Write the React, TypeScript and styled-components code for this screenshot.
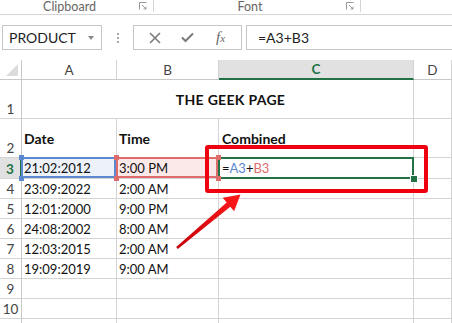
import React from 'react';
import styled, { createGlobalStyle, css } from 'styled-components';

const GRID = '#d4d4d4';
const GREEN = '#217346';
const REF_BLUE = '#5b88cf';
const REF_RED = '#df6c6a';

const GlobalStyle = createGlobalStyle`
  html, body {
    margin: 0;
    padding: 0;
    background: #ffffff;
  }
  * {
    box-sizing: border-box;
  }
`

const Page = styled.div `
  position: relative;
  width: 452px;
  height: 323px;
  overflow: hidden;
  background: #ffffff;
  font-family: Lato, "Open Sans", sans-serif;
`
const RibbonFooter = styled.div `
  height: 15px;
  display: flex;
  border-bottom: 1px solid #d5d5d5;
`
const RibbonGroup = styled.div<{ $width: number }> `
  width: ${p => p.$width}px;
  height: 12px;
  display: flex;
  align-items: center;
  border-right: 1px solid #d5d5d5;
  padding-right: 6px;
`
const GroupLabel = styled.span `
  flex: 1;
  text-align: center;
  font-size: 12.5px;
  line-height: 12px;
  color: #666666;
  margin-top: 1px;
`
const FormulaBar = styled.div `
  display: flex;
  height: 25px;
  margin-top: 10px;
  padding-left: 2px;
`
const NameBox = styled.div `
  width: 100px;
  border: 1px solid #c6c6c6;
  display: flex;
  align-items: center;
  padding: 0 7px 0 6px;
  font-size: 14px;
  color: #222222;
  justify-content: space-between;
`
const Caret = styled.span `
  width: 0;
  height: 0;
  border-left: 3.5px solid transparent;
  border-right: 3.5px solid transparent;
  border-top: 4px solid #8a8a8a;
`
const Grip = styled.div `
  width: 31px;
  display: flex;
  flex-direction: column;
  align-items: center;
  justify-content: center;
  gap: 2px;
  & > span {
    width: 2px;
    height: 2px;
    background: #a8a8a8;
  }
`
const ButtonsBox = styled.div `
  width: 109px;
  border: 1px solid #c6c6c6;
  display: flex;
  align-items: center;
  justify-content: space-around;
  padding: 0 4px;
`
const IconButton = styled.span `
  width: 22px;
  display: flex;
  justify-content: center;
  align-items: center;
  color: #777777;
`
const Fx = styled.span `
  font-family: "Liberation Serif", serif;
  font-style: italic;
  font-size: 15px;
  color: #666666;
  & > small {
    font-size: 11px;
  }
`
const FormulaInput = styled.div `
  flex: 1;
  margin-left: 4px;
  border: 1px solid #c6c6c6;
  border-right: none;
  display: flex;
  align-items: center;
  padding-left: 11px;
  font-size: 14px;
  color: #222222;
`
const Sheet = styled.div `
  margin-top: 10px;
  display: grid;
  grid-template-columns: 22px 95px 102px 195px 1fr;
  grid-template-rows: 20px 39px 39px 21px repeat(8, 20px);
`
const Corner = styled.div `
  position: relative;
  border-right: 1px solid #c8c8c8;
  border-bottom: 1px solid #c8c8c8;
  &::after {
    content: '';
    position: absolute;
    right: 3px;
    bottom: 3px;
    width: 0;
    height: 0;
    border-left: 12px solid transparent;
    border-bottom: 12px solid #dcdcdc;
  }
`
const ColHeader = styled.div<{ $active?: boolean }> `
  display: flex;
  align-items: center;
  justify-content: center;
  font-size: 13.5px;
  color: #444444;
  border-right: 1px solid ${GRID};
  border-bottom: 1px solid #c8c8c8;
  ${p => p.$active && css`
    background: #e1e1e1;
    color: ${GREEN};
    font-weight: 700;
    border-bottom: 2px solid ${GREEN};
  `}
`
const RowHeader = styled.div<{ $active?: boolean }> `
  display: flex;
  align-items: flex-end;
  justify-content: center;
  padding-bottom: 1px;
  font-size: 13.5px;
  color: #444444;
  border-right: 1px solid #c8c8c8;
  border-bottom: 1px solid ${GRID};
  ${p => p.$active && css`
    background: #e1e1e1;
    color: ${GREEN};
    font-weight: 700;
    border-right: 2px solid ${GREEN};
  `}
`
const Cell = styled.div<{ $bold?: boolean; $span?: number; $center?: boolean; $tone?: string; $fill?: string }> `
  position: relative;
  display: flex;
  align-items: center;
  justify-content: ${p => (p.$center ? 'center' : 'flex-start')};
  padding-left: 2px;
  grid-column: span ${p => p.$span || 1};
  font-size: ${p => (p.$bold ? '14px' : '13px')};
  font-weight: ${p => (p.$bold ? 700 : 400)};
  color: #111111;
  white-space: nowrap;
  border-right: 1px solid ${GRID};
  border-bottom: 1px solid ${GRID};
  background: ${p => p.$fill || 'transparent'};
  ${p => p.$tone && css`
    &::after {
      content: '';
      position: absolute;
      top: -1px;
      left: -1px;
      right: 0;
      bottom: 0;
      border: 2px solid ${p.$tone};
    }
  `}
`
const Title = styled(Cell) `
  padding-left: 26px;
  letter-spacing: 0.3px;
`
const ActiveCell = styled(Cell) `
  padding-left: 3px;
  z-index: 2;
  &::after {
    content: '';
    position: absolute;
    top: -1px;
    left: -1px;
    right: -1px;
    bottom: -1px;
    border: 2px solid ${GREEN};
  }
`
const Handle = styled.span<{ $color: string; $side: 'left' | 'right'; $edge: 'top' | 'bottom' }> `
  position: absolute;
  z-index: 3;
  width: 5px;
  height: 5px;
  background: ${p => p.$color};
  ${p => p.$side}: -3px;
  ${p => p.$edge}: -3px;
`
const FillHandle = styled.span `
  position: absolute;
  z-index: 3;
  right: -4px;
  bottom: -4px;
  width: 6px;
  height: 6px;
  background: ${GREEN};
  outline: 1px solid #ffffff;
`
const RefA = styled.span `
  color: ${REF_BLUE};
`
const RefB = styled.span `
  color: ${REF_RED};
`
const Callout = styled.div `
  position: absolute;
  z-index: 5;
  left: 205px;
  top: 145px;
  width: 223px;
  height: 48px;
  border: 4px solid #ee0010;
  border-radius: 3px;
`
const Overlay = styled.svg `
  position: absolute;
  z-index: 5;
  left: 0;
  top: 0;
  pointer-events: none;
`

const Launcher = () => (
  <svg width="8" height="8" viewBox="0 0 8 8">
    <path d="M0.5 7.5V0.5H7.5" fill="none" stroke="#9a9a9a" />
    <path d="M3 3L7 7M7 4.5V7H4.5" fill="none" stroke="#9a9a9a" />
  </svg>
);

const rows = [
  ['21:02:2012', '3:00 PM'],
  ['23:09:2022', '2:00 AM'],
  ['12:01:2000', '9:00 PM'],
  ['24:08:2002', '8:00 AM'],
  ['12:03:2015', '2:00 AM'],
  ['19:09:2019', '9:00 AM'],
];

function App() {
  return (
    <Page>
      <GlobalStyle />
      <RibbonFooter>
        <RibbonGroup $width={154}>
          <GroupLabel>Clipboard</GroupLabel>
          <Launcher />
        </RibbonGroup>
        <RibbonGroup $width={207}>
          <GroupLabel>Font</GroupLabel>
          <Launcher />
        </RibbonGroup>
      </RibbonFooter>

      <FormulaBar>
        <NameBox>PRODUCT <Caret /></NameBox>
        <Grip><span /><span /><span /></Grip>
        <ButtonsBox>
          <IconButton>
            <svg width="12" height="12" viewBox="0 0 12 12">
              <path d="M1 1L11 11M11 1L1 11" stroke="#7a7a7a" strokeWidth="1.6" />
            </svg>
          </IconButton>
          <IconButton>
            <svg width="13" height="11" viewBox="0 0 13 11">
              <path d="M1 5.5L4.5 9L12 1.5" fill="none" stroke="#7a7a7a" strokeWidth="2" />
            </svg>
          </IconButton>
          <IconButton>
            <Fx>f<small>x</small></Fx>
          </IconButton>
        </ButtonsBox>
        <FormulaInput>=A3+B3</FormulaInput>
      </FormulaBar>

      <Sheet>
        <Corner />
        <ColHeader>A</ColHeader>
        <ColHeader>B</ColHeader>
        <ColHeader $active>C</ColHeader>
        <ColHeader>D</ColHeader>

        <RowHeader>1</RowHeader>
        <Title $span={3} $bold $center>THE GEEK PAGE</Title>
        <Cell />

        <RowHeader>2</RowHeader>
        <Cell $bold>Date</Cell>
        <Cell $bold>Time</Cell>
        <Cell $bold style={{ paddingLeft: 3 }}>Combined</Cell>
        <Cell />

        {rows.map(([date, time], i) => {
          const n = i + 3;
          if (n === 3) {
            return (
              <React.Fragment key={n}>
                <RowHeader $active>{n}</RowHeader>
                <Cell $tone={REF_BLUE} $fill="#edf2fa">
                  {date}
                  <Handle $color={REF_BLUE} $side="left" $edge="top" />
                  <Handle $color={REF_BLUE} $side="left" $edge="bottom" />
                </Cell>
                <Cell $tone={REF_RED} $fill="#fbe8e8">
                  {time}
                  <Handle $color={REF_RED} $side="left" $edge="top" />
                  <Handle $color={REF_RED} $side="left" $edge="bottom" />
                  <Handle $color={REF_RED} $side="right" $edge="top" />
                  <Handle $color={REF_RED} $side="right" $edge="bottom" />
                </Cell>
                <ActiveCell>
                  =<RefA>A3</RefA>+<RefB>B3</RefB>
                  <FillHandle />
                </ActiveCell>
                <Cell />
              </React.Fragment>
            );
          }
          return (
            <React.Fragment key={n}>
              <RowHeader>{n}</RowHeader>
              <Cell>{date}</Cell>
              <Cell>{time}</Cell>
              <Cell />
              <Cell />
            </React.Fragment>
          );
        })}

        {[9, 10, 0, 0].map((n, i) => (
          <React.Fragment key={i}>
            <RowHeader>{n || ''}</RowHeader>
            <Cell />
            <Cell />
            <Cell />
            <Cell />
          </React.Fragment>
        ))}
      </Sheet>

      <Callout />
      <Overlay width="452" height="323" viewBox="0 0 452 323">
        <defs>
          <linearGradient id="arrowFill" x1="177" y1="248" x2="240" y2="195" gradientUnits="userSpaceOnUse">
            <stop offset="0" stopColor="#c4000a" />
            <stop offset="1" stopColor="#ff1a1a" />
          </linearGradient>
        </defs>
        <polygon
          points="176.2,247 226.7,202.6 222.7,197.7 240.5,194.5 234.1,211.3 230.3,206.8 177.8,249"
          fill="url(#arrowFill)"
        />
      </Overlay>
    </Page>
  );
}

export default App;
